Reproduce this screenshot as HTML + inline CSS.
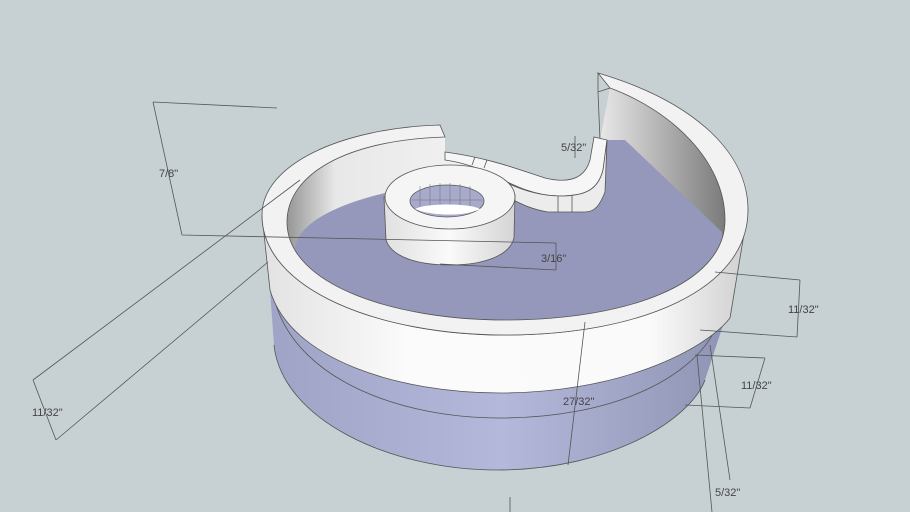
<!DOCTYPE html>
<html><head><meta charset="utf-8"><style>
html,body{margin:0;padding:0;width:910px;height:512px;overflow:hidden;background:#c7d1d3}
svg{display:block}
text{font-family:"Liberation Sans",sans-serif;font-size:11px;fill:#444}
</style></head><body>
<svg width="910" height="512" viewBox="0 0 910 512">
<defs>
<linearGradient id="lw" x1="0" x2="1">
<stop offset="0" stop-color="#9fa4c6"/><stop offset="0.5" stop-color="#b4b8da"/><stop offset="1" stop-color="#8e93b3"/></linearGradient>
<linearGradient id="wb" x1="0" x2="1">
<stop offset="0" stop-color="#e2e2e2"/><stop offset="0.3" stop-color="#fbfbfb"/><stop offset="0.8" stop-color="#fafafa"/><stop offset="1" stop-color="#cfcfcf"/></linearGradient>
<linearGradient id="iw" x1="0" x2="1">
<stop offset="0" stop-color="#8a8a8a"/><stop offset="0.12" stop-color="#e8e8e8"/><stop offset="0.5" stop-color="#f4f4f4"/><stop offset="0.7" stop-color="#e6e6e6"/><stop offset="1" stop-color="#6e6e6e"/></linearGradient>
<linearGradient id="hs" x1="0" x2="1">
<stop offset="0" stop-color="#e0e0e0"/><stop offset="0.5" stop-color="#fafafa"/><stop offset="1" stop-color="#d4d4d4"/></linearGradient>
<clipPath id="inner"><path d="M445,137 C345,140 287,175 287,222 C287,285 395,320 505,320 C625,320 725,285 725,220 C725,160 670,110 610,88 L600,140 C590,190 560,185 530,180 C500,172 475,160 445,160 Z"/></clipPath>
</defs>
<g stroke="#555" stroke-width="0.8" fill="none">
<path d="M270,290 L274,345 C282,420 390,470 497,470 C610,470 690,420 705,380 L728,310 L735,275 Z" fill="url(#lw)" stroke="none"/>
<path d="M274,345 C282,420 390,470 497,470 C610,470 690,420 705,380"/>
<path d="M276,305 C300,380 400,418 500,418 C610,418 690,380 715,330"/>
<path d="M262,215 L270,290 C290,360 400,393 500,393 C620,393 705,350 730,318 L748,210 C740,290 640,335 505,335 C380,335 262,290 262,215 Z" fill="url(#wb)"/>
<g clip-path="url(#inner)">
<rect x="280" y="80" width="460" height="250" fill="url(#iw)" stroke="none"/>
<ellipse cx="510" cy="250" rx="215" ry="70" fill="#9598ba" stroke="none"/>
<path d="M590,140 L625,140 L722,232 L722,320 L480,320 L480,170 Z" fill="#9598ba" stroke="none"/>
</g>
<path d="M440,125 C340,128 262,165 262,215 C262,290 380,335 505,335 C640,335 748,290 748,210 C748,150 690,100 598,73 L610,88 C670,110 725,160 725,220 C725,285 625,320 505,320 C395,320 287,285 287,222 C287,175 345,140 445,137 Z" fill="#f2f2f2"/>
<path d="M598,73 L598,92 L610,88"/>
<path d="M598,92 L600,140"/>
<path d="M445,152 C490,158 520,170 545,178 C570,184 585,178 590,160 L594,137 L607,140 L603,170 C598,190 585,196 560,196 C535,196 515,186 495,176 C480,168 460,162 445,160 Z" fill="#f6f6f6"/>
<path d="M475,157 L472,165 M487,160 L484,168"/>
<path d="M505,182 C525,192 545,196 560,196 C585,196 598,190 603,170 L607,140 L605,192 C600,205 595,212 585,212 L548,212 C535,210 522,205 510,198 Z" fill="#ececec"/>
<path d="M558,196 L558,212 M572,195 L572,212"/>
<path d="M384,197 L386,240 C392,258 420,265 450,265 C485,265 510,255 514,238 L515,195 Z" fill="url(#hs)"/>
<ellipse cx="450" cy="197" rx="65" ry="32" fill="#f5f5f5"/>
<ellipse cx="447" cy="201" rx="37" ry="16" fill="#a7aac8"/>
<path d="M420,186 L420,212 M430,184 L430,214 M440,183 L440,215 M450,183 L450,215 M460,184 L460,214 M470,186 L470,212 M412,200 L482,200" stroke="#6a6d8a" stroke-width="0.5"/>
<path d="M415,209 C430,216 465,217 480,209 C470,203 425,203 415,209 Z" fill="#fff" stroke="none"/>
<path d="M153,102 L277,108 M153,102 L182,235 M182,235 L556,243 M33,380 L300,180 M33,380 L56,440 M56,440 L268,262"/>
<path d="M440,264 L556,270 M556,243 L556,270 M575,136 L575,158"/>
<path d="M715,272 L800,280 M700,330 L797,337 M800,280 L797,337"/>
<path d="M695,355 L765,358 M685,405 L750,408 M765,358 L750,408"/>
<path d="M585,322 L568,465 M697,355 L712,512 M710,345 L730,480"/>
<path d="M510,497 L510,512"/>
</g>
<text x="159" y="177">7/8"</text>
<text x="32" y="416">11/32"</text>
<text x="541" y="262">3/16"</text>
<text x="561" y="151">5/32"</text>
<text x="788" y="313">11/32"</text>
<text x="741" y="389">11/32"</text>
<text x="563" y="405">27/32"</text>
<text x="715" y="496">5/32"</text>
</svg>
</body></html>
